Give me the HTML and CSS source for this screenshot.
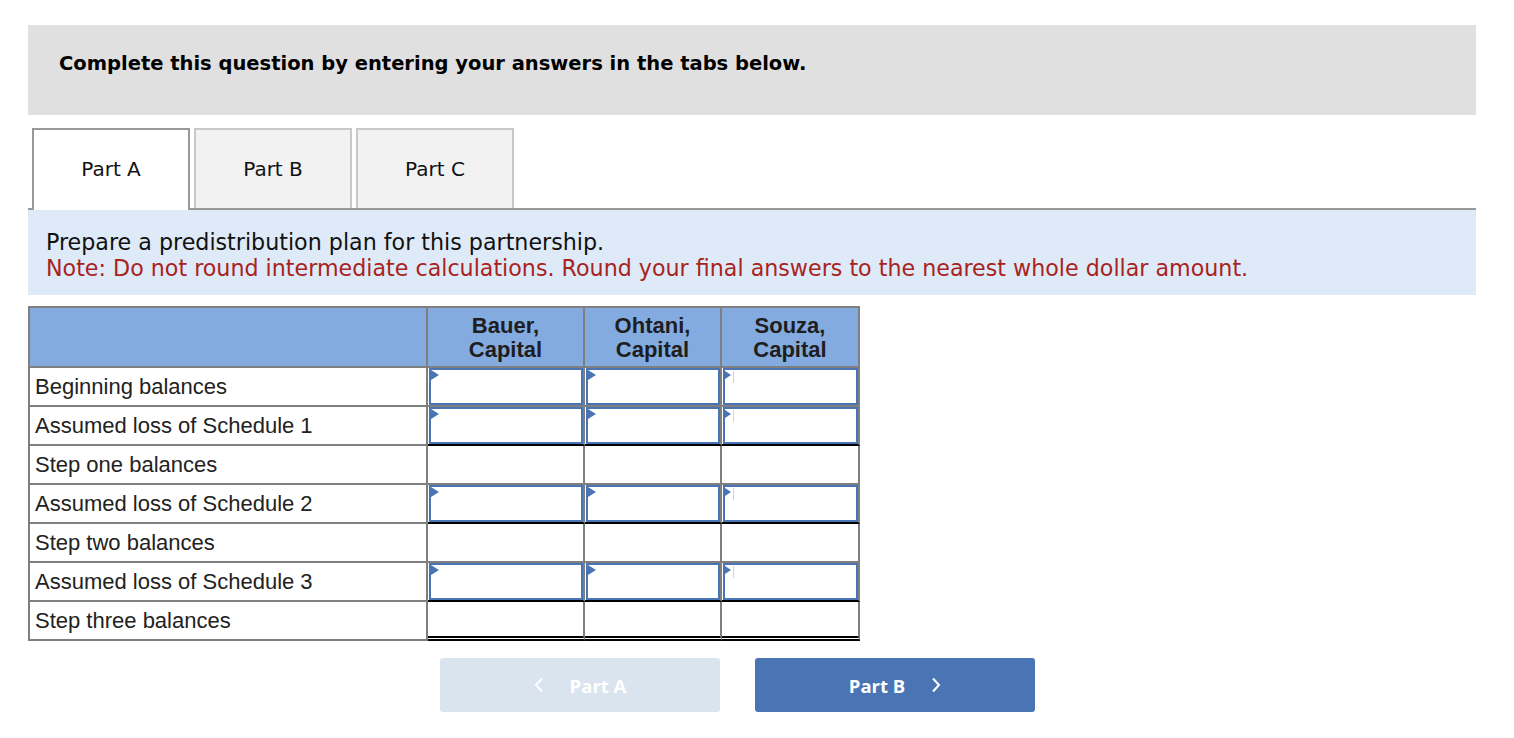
FILE: index.html
```html
<!DOCTYPE html>
<html>
<head>
<meta charset="utf-8">
<link rel="stylesheet" href="styles.css">
</head>
<body>
<div class="page">
  <div class="instructions">Complete this question by entering your answers in the tabs below.</div>

  <div class="tabs">
    <div class="tab active">Part A</div>
    <div class="tab">Part B</div>
    <div class="tab">Part C</div>
  </div>

  <div class="prompt">
    <div class="prompt-main">Prepare a predistribution plan for this partnership.</div>
    <div class="prompt-note">Note: Do not round intermediate calculations. Round your final answers to the nearest whole dollar amount.</div>
  </div>

  <table class="grid">
    <colgroup>
      <col class="c-label">
      <col class="c-bauer">
      <col class="c-ohtani">
      <col class="c-souza">
    </colgroup>
    <thead>
      <tr>
        <th></th>
        <th>Bauer,<br>Capital</th>
        <th>Ohtani,<br>Capital</th>
        <th>Souza,<br>Capital</th>
      </tr>
    </thead>
    <tbody>
      <tr>
        <td class="label">Beginning balances</td>
        <td class="in"><div class="box"><span class="flag"></span></div></td>
        <td class="in"><div class="box"><span class="flag"></span></div></td>
        <td class="in"><div class="box"><span class="flag small"></span><span class="caret"></span></div></td>
      </tr>
      <tr>
        <td class="label">Assumed loss of Schedule 1</td>
        <td class="in sum-above"><div class="box"><span class="flag"></span></div></td>
        <td class="in sum-above"><div class="box"><span class="flag"></span></div></td>
        <td class="in sum-above"><div class="box"><span class="flag small"></span><span class="caret"></span></div></td>
      </tr>
      <tr>
        <td class="label">Step one balances</td>
        <td></td><td></td><td></td>
      </tr>
      <tr>
        <td class="label">Assumed loss of Schedule 2</td>
        <td class="in sum-above"><div class="box"><span class="flag"></span></div></td>
        <td class="in sum-above"><div class="box"><span class="flag"></span></div></td>
        <td class="in sum-above"><div class="box"><span class="flag small"></span><span class="caret"></span></div></td>
      </tr>
      <tr>
        <td class="label">Step two balances</td>
        <td></td><td></td><td></td>
      </tr>
      <tr>
        <td class="label">Assumed loss of Schedule 3</td>
        <td class="in sum-above"><div class="box"><span class="flag"></span></div></td>
        <td class="in sum-above"><div class="box"><span class="flag"></span></div></td>
        <td class="in sum-above"><div class="box"><span class="flag small"></span><span class="caret"></span></div></td>
      </tr>
      <tr>
        <td class="label">Step three balances</td>
        <td class="total"></td><td class="total"></td><td class="total"></td>
      </tr>
    </tbody>
  </table>

  <div class="nav">
    <div class="btn prev">
      <svg class="chev" width="10" height="16" viewBox="0 0 10 16"><polyline points="8,1.5 2,8 8,14.5" fill="none" stroke="#fff" stroke-width="2"/></svg>
      <span>Part A</span>
    </div>
    <div class="btn next">
      <span>Part B</span>
      <svg class="chev" width="10" height="16" viewBox="0 0 10 16"><polyline points="2,1.5 8,8 2,14.5" fill="none" stroke="#fff" stroke-width="2"/></svg>
    </div>
  </div>
</div>
</body>
</html>
```

FILE: styles.css
```css
html, body {
  margin: 0;
  padding: 0;
  background: #fff;
}

.page {
  margin: 25px 0 0 28px;
  width: 1448px;
  font-family: "DejaVu Sans", Verdana, sans-serif;
  color: #000;
}

.instructions {
  height: 90px;
  box-sizing: border-box;
  background: #e0e0e0;
  padding: 27px 0 0 31px;
  font-weight: bold;
  font-size: 19.5px;
  line-height: 24px;
}

.tabs {
  display: flex;
  gap: 4px;
  margin-top: 13px;
  padding-left: 4px;
  border-bottom: 2px solid #999;
  height: 80px;
}

.tab {
  width: 158px;
  box-sizing: border-box;
  height: 80px;
  border: 2px solid #c8c8c8;
  border-bottom: none;
  background: #f2f2f2;
  display: flex;
  align-items: center;
  justify-content: center;
  font-size: 20px;
  color: #111;
}

.tab.active {
  height: 82px;
  border-color: #999;
  background: #fff;
  position: relative;
  z-index: 1;
  padding-bottom: 2px;
}

.prompt {
  background: #deeaf7;
  padding: 19px 18px 14px;
  font-size: 22.2px;
  line-height: 26px;
}

.prompt-main {
  color: #111;
}

.prompt-note {
  color: #a8231d;
}

.grid {
  margin-top: 11px;
  border-collapse: separate;
  border-spacing: 0;
  table-layout: fixed;
  width: 832px;
  border-top: 2px solid #7f7f7f;
  border-left: 2px solid #7f7f7f;
  font-family: "Liberation Sans", Arial, sans-serif;
}

.c-label { width: 398px; }
.c-bauer { width: 157px; }
.c-ohtani { width: 137px; }
.c-souza { width: 138px; }

.grid th,
.grid td {
  border-right: 2px solid #7f7f7f;
  border-bottom: 2px solid #7f7f7f;
  padding: 0;
  box-sizing: border-box;
}

.grid th {
  background: #84abe0;
  height: 60px;
  font-size: 22px;
  line-height: 24px;
  font-weight: bold;
  color: #1e1e1e;
  text-align: center;
  padding-top: 2px;
}

.grid td {
  height: 39px;
  background: #fff;
}

.grid td.label {
  font-size: 22px;
  color: #222;
  padding-left: 5px;
  padding-top: 1px;
}

.grid td.sum-above {
  border-bottom-color: #000;
}

.grid td.total {
  border-bottom: 5px double #000;
}

.box {
  position: relative;
  height: 37px;
  box-sizing: border-box;
  border: 2px solid #4a74b4;
  margin-left: 1px;
}

.flag {
  position: absolute;
  left: 0;
  top: 0;
  width: 0;
  height: 0;
  border-left: 8px solid #4a74b4;
  border-top: 5px solid transparent;
  border-bottom: 5px solid transparent;
}

.flag.small {
  border-left-width: 6px;
  border-top-width: 4px;
  border-bottom-width: 4px;
  top: 1px;
}

.caret {
  position: absolute;
  left: 8px;
  top: 1px;
  width: 1px;
  height: 12px;
  background: #c5d5ee;
}

.nav {
  display: flex;
  gap: 35px;
  margin: 17px 0 0 412px;
}

.btn {
  width: 280px;
  height: 54px;
  border-radius: 3px;
  display: flex;
  align-items: center;
  justify-content: center;
  gap: 26px;
  font-family: "Open Sans", sans-serif;
  font-weight: bold;
  font-size: 18.5px;
  color: #fff;
  box-sizing: border-box;
}

.btn.prev {
  background: #dae4ef;
}

.btn.next {
  background: #4a74b4;
}

.chev {
  display: block;
}
```
